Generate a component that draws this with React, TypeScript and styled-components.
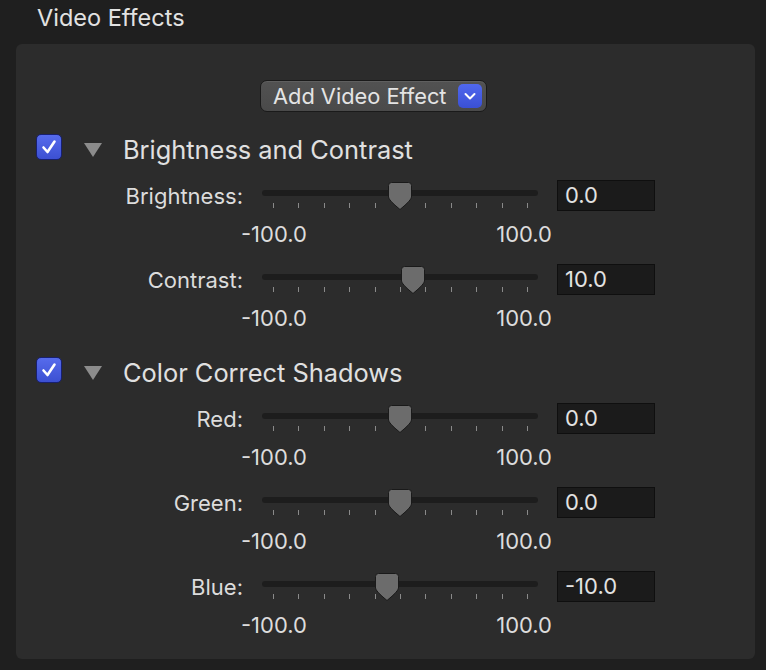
import React from "react";
import styled, { createGlobalStyle } from "styled-components";

const Global = createGlobalStyle`
  html, body { margin: 0; padding: 0; background: #1f1f1f; }
  body { font-family: Inter, "Noto Sans", "Liberation Sans", sans-serif; color: #dedede; }
  * { box-sizing: border-box; }
`;

const Page = styled.div`
  width: 766px;
  height: 670px;
  background: #1f1f1f;
  padding: 0 11px 0 16px;
  display: flex;
  flex-direction: column;
`;

const Title = styled.div`
  font-size: 23.5px;
  line-height: 36px;
  padding: 0 0 0 21px;
  height: 44px;
  color: #e2e2e2;
`;

const Panel = styled.div`
  width: 739px;
  height: 615px;
  background: #2c2c2c;
  border-radius: 6px;
  padding: 36px 0 20px;
  display: flex;
  flex-direction: column;
`;

const ButtonRow = styled.div`
  display: flex;
  padding-left: 244px;
`;

const PopupButton = styled.div`
  width: 227px;
  height: 32px;
  border-radius: 7px;
  background: linear-gradient(#525252, #4a4a4a);
  border: 1px solid #1a1a1a;
  box-shadow: inset 0 1px 0 rgba(255,255,255,0.08);
  display: flex;
  align-items: center;
  justify-content: space-between;
  padding: 0 4px 0 12px;
  font-size: 21.8px;
  color: #e4e4e4;
`;

const ChevronBox = styled.div`
  width: 24px;
  height: 24px;
  border-radius: 5px;
  background: linear-gradient(#5068ee, #3a50d4);
  display: flex;
  align-items: center;
  justify-content: center;
`;

const Section = styled.div<{ $top: number }>`
  margin-top: ${(p) => p.$top}px;
  display: flex;
  flex-direction: column;
`;

const Heading = styled.div`
  height: 30px;
  display: flex;
  align-items: center;
  padding-left: 20px;
  font-size: 25.4px;
  color: #e0e0e0;
`;

const CheckBox = styled.div`
  width: 26px;
  height: 26px;
  border-radius: 5px;
  background: linear-gradient(#566bec, #3c50d2);
  border: 1px solid #182070;
  display: flex;
  align-items: center;
  justify-content: center;
  margin-top: -4px;
`;

const Disclosure = styled.div`
  width: 0;
  height: 0;
  border-left: 9px solid transparent;
  border-right: 9px solid transparent;
  border-top: 14px solid #8c8c8c;
  margin-left: 22px;
  margin-right: 21px;
  margin-top: 1px;
`;

const SliderList = styled.div`
  margin-top: 16px;
  display: flex;
  flex-direction: column;
  gap: 17px;
`;

const SliderBlock = styled.div`
  display: grid;
  grid-template-columns: 227px 276px 98px;
  column-gap: 19px;
  grid-template-rows: 31px 26px;
  row-gap: 10px;
`;

const Label = styled.div`
  font-size: 22px;
  text-align: right;
  align-self: center;
  line-height: 26px;
  color: #dcdcdc;
  margin-top: 1px;
`;

const SliderArea = styled.div`
  position: relative;
  height: 31px;
`;

const Track = styled.div`
  position: absolute;
  left: 0;
  right: 0;
  top: 10px;
  height: 6px;
  border-radius: 3px;
  background: #1d1d1d;
`;

const Ticks = styled.div`
  position: absolute;
  left: 11px;
  width: 255px;
  top: 23px;
  height: 5px;
  display: flex;
  justify-content: space-between;
`;

const Tick = styled.div`
  width: 1px;
  height: 5px;
  background: #8a8a8a;
`;

const Thumb = styled.svg`
  position: absolute;
  top: 2px;
  width: 24px;
  height: 28px;
`;

const Field = styled.div`
  height: 31px;
  background: #1b1b1b;
  border: 1px solid #0f0f0f;
  font-size: 22px;
  line-height: 29px;
  padding-left: 7px;
  color: #e2e2e2;
`;

const Limits = styled.div`
  grid-column: 2;
  margin: 0 -14px 0 -21px;
  display: flex;
  justify-content: space-between;
  font-size: 22px;
  line-height: 26px;
  color: #dcdcdc;
`;

type SliderProps = { label: string; value: number };

const Slider: React.FC<SliderProps> = ({ label, value }) => {
  const center = 12 + ((value + 100) / 200) * 252;
  return (
    <SliderBlock>
      <Label>{label}</Label>
      <SliderArea>
        <Track />
        <Ticks>
          {Array.from({ length: 11 }).map((_, i) => (
            <Tick key={i} />
          ))}
        </Ticks>
        <Thumb viewBox="0 0 24 28" style={{ left: center - 12 }}>
          <path
            d="M3.5 0.5 H20.5 A3 3 0 0 1 23.5 3.5 V15 Q23.5 18 12 27.5 Q0.5 18 0.5 15 V3.5 A3 3 0 0 1 3.5 0.5 Z"
            fill="#6c6c6c"
            stroke="#1a1a1a"
            strokeWidth="1"
          />
        </Thumb>
      </SliderArea>
      <Field>{value.toFixed(1)}</Field>
      <Limits>
        <span>-100.0</span>
        <span>100.0</span>
      </Limits>
    </SliderBlock>
  );
};

const Check = () => (
  <svg width="18" height="18" viewBox="0 0 18 18">
    <path d="M3.5 9.5 L7.5 14 L14.5 3.5" fill="none" stroke="#fff" strokeWidth="2.6" strokeLinecap="round" strokeLinejoin="round" />
  </svg>
);

const EffectSection: React.FC<{ title: string; top: number; sliders: SliderProps[] }> = ({ title, top, sliders }) => (
  <Section $top={top}>
    <Heading>
      <CheckBox>
        <Check />
      </CheckBox>
      <Disclosure />
      <span>{title}</span>
    </Heading>
    <SliderList>
      {sliders.map((s) => (
        <Slider key={s.label} {...s} />
      ))}
    </SliderList>
  </Section>
);

export default function App() {
  return (
    <>
      <Global />
      <Page>
        <Title>Video Effects</Title>
        <Panel>
          <ButtonRow>
            <PopupButton>
              <span>Add Video Effect</span>
              <ChevronBox>
                <svg width="14" height="10" viewBox="0 0 14 10">
                  <path d="M2.5 3 L7 7.5 L11.5 3" fill="none" stroke="#fff" strokeWidth="2" strokeLinecap="round" strokeLinejoin="round" />
                </svg>
              </ChevronBox>
            </PopupButton>
          </ButtonRow>
          <EffectSection
            title="Brightness and Contrast"
            top={22}
            sliders={[
              { label: "Brightness:", value: 0 },
              { label: "Contrast:", value: 10 },
            ]}
          />
          <EffectSection
            title="Color Correct Shadows"
            top={26}
            sliders={[
              { label: "Red:", value: 0 },
              { label: "Green:", value: 0 },
              { label: "Blue:", value: -10 },
            ]}
          />
        </Panel>
      </Page>
    </>
  );
}
